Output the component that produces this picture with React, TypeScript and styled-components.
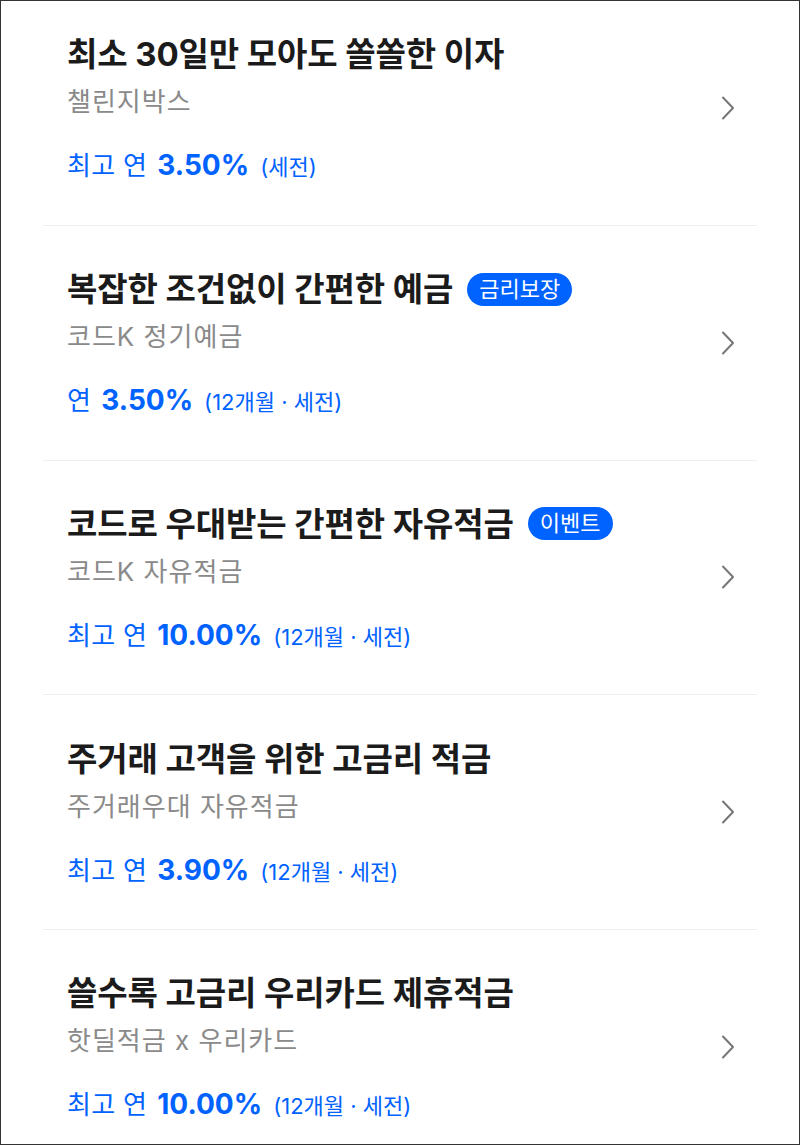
import React from "react";
import styled, { createGlobalStyle } from "styled-components";

const GlobalStyle = createGlobalStyle`
  html, body { margin: 0; padding: 0; background: #ffffff; }
  * { box-sizing: border-box; }
`;

const FONT = `Inter, "Noto Sans CJK KR", "Noto Sans", sans-serif`;
const BLUE = "#0062ff";

const Frame = styled.div`
  width: 800px;
  height: 1145px;
  border: 1px solid #333333;
  overflow: hidden;
  background: #ffffff;
  font-family: ${FONT};
`;

const List = styled.ul`
  list-style: none;
  margin: -10px 42px 0;
  padding: 0;
`;

const Item = styled.li`
  display: flex;
  align-items: center;
  height: 234.75px;
  padding: 0 22px 0 24px;
  border-bottom: 1px solid #eeeeee;
  cursor: pointer;
`;

const Body = styled.div`
  flex: 1;
  display: flex;
  flex-direction: column;
  padding-top: 4px;
`;

const TitleRow = styled.div`
  display: flex;
  align-items: center;
  height: 40px;
`;

const Title = styled.h3`
  margin: 0;
  font-size: 33px;
  line-height: 40px;
  font-weight: 700;
  color: #1b1b1b;
  letter-spacing: -0.1px;
`;

const Badge = styled.span`
  margin-left: 14px;
  height: 33px;
  padding: 0 12px;
  border-radius: 17px;
  background: ${BLUE};
  color: #ffffff;
  font-size: 22px;
  line-height: 33px;
  font-weight: 400;
`;

const Sub = styled.div`
  margin-top: 12px;
  font-size: 26px;
  line-height: 32px;
  color: #8a8a8a;
  font-weight: 400;
  letter-spacing: 1px;
`;

const Rate = styled.div`
  margin-top: 27px;
  display: flex;
  align-items: baseline;
  height: 40px;
  line-height: 40px;
  color: ${BLUE};
`;

const RateLabel = styled.span`
  font-size: 26px;
  font-weight: 400;
  margin-right: 10px;
  letter-spacing: 0.3px;
`;

const RateValue = styled.span`
  font-size: 28px;
  font-weight: 700;
  margin-right: 11px;
`;

const RateNote = styled.span`
  font-size: 22px;
  font-weight: 400;
`;

const Chevron = () => (
  <svg width="14" height="24" viewBox="0 0 14 24" fill="none">
    <path d="M2 1.5 L12 12 L2 22.5" stroke="#777777" strokeWidth="2" strokeLinecap="round" strokeLinejoin="round" />
  </svg>
);

type Product = {
  title: string;
  badge?: string;
  sub: string;
  label: string;
  value: string;
  note: string;
};

const products: Product[] = [
  { title: "최소 30일만 모아도 쏠쏠한 이자", sub: "챌린지박스", label: "최고 연", value: "3.50%", note: "(세전)" },
  { title: "복잡한 조건없이 간편한 예금", badge: "금리보장", sub: "코드K 정기예금", label: "연", value: "3.50%", note: "(12개월 · 세전)" },
  { title: "코드로 우대받는 간편한 자유적금", badge: "이벤트", sub: "코드K 자유적금", label: "최고 연", value: "10.00%", note: "(12개월 · 세전)" },
  { title: "주거래 고객을 위한 고금리 적금", sub: "주거래우대 자유적금", label: "최고 연", value: "3.90%", note: "(12개월 · 세전)" },
  { title: "쓸수록 고금리 우리카드 제휴적금", sub: "핫딜적금 x 우리카드", label: "최고 연", value: "10.00%", note: "(12개월 · 세전)" },
];

export default function App() {
  return (
    <>
      <GlobalStyle />
      <Frame>
        <List>
          {products.map((p) => (
            <Item key={p.title}>
              <Body>
                <TitleRow>
                  <Title>{p.title}</Title>
                  {p.badge && <Badge>{p.badge}</Badge>}
                </TitleRow>
                <Sub>{p.sub}</Sub>
                <Rate>
                  <RateLabel>{p.label}</RateLabel>
                  <RateValue>{p.value}</RateValue>
                  <RateNote>{p.note}</RateNote>
                </Rate>
              </Body>
              <Chevron />
            </Item>
          ))}
        </List>
      </Frame>
    </>
  );
}
